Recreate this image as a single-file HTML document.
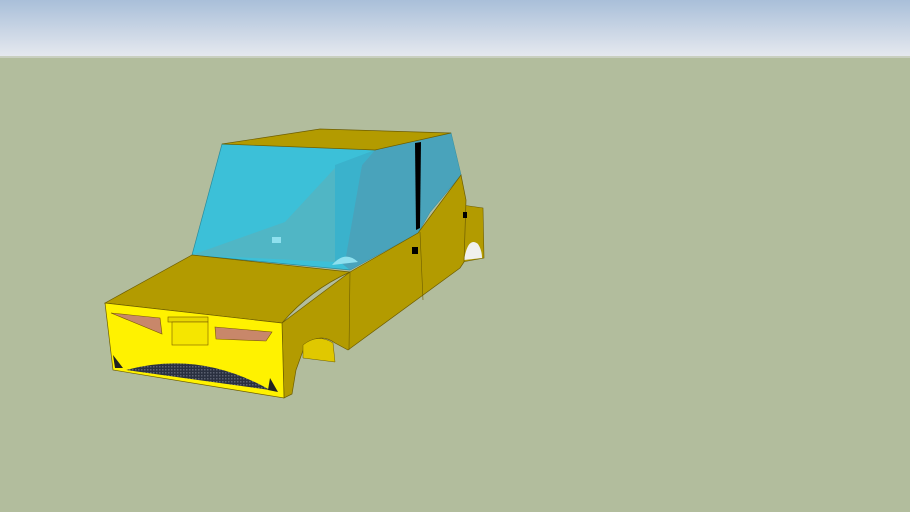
<!DOCTYPE html>
<html><head><style>html,body{margin:0;padding:0;width:910px;height:512px;overflow:hidden;background:#b2bd9d}</style></head>
<body>
<svg width="910" height="512" viewBox="0 0 910 512" xmlns="http://www.w3.org/2000/svg">
<defs><linearGradient id="sky" x1="0" y1="0" x2="0" y2="1"><stop offset="0" stop-color="#a9bfd9"/><stop offset="1" stop-color="#e6e9ef"/></linearGradient>
<pattern id="mesh" width="3" height="3" patternUnits="userSpaceOnUse"><rect width="3" height="3" fill="#2a3040"/><rect width="1.5" height="1.5" fill="#5a6070"/></pattern></defs>
<rect width="910" height="57" fill="url(#sky)"/>
<rect y="56" width="910" height="2" fill="#c9cfc0"/>
<rect y="58" width="910" height="454" fill="#b2bd9d"/>
<!-- rear wheel arch piece -->
<path d="M462,205 L483,208 L484,258 L462,262 Z" fill="#b39b00" stroke="#6d5d00" stroke-width="0.6"/>
<path d="M464,260 Q468,236 478,244 Q482,250 482,258 Z" fill="#f0f0ee"/>
<!-- glass -->
<path d="M222,144 L451,133 L461,175 L430,212 L418,233 L350,270 L192,255 Z" fill="#3cc0d8" stroke="#2a8c9c" stroke-width="0.7"/>
<path d="M375,150 L451,133 L461,175 L430,212 L418,233 L350,270 L340,262 L362,165 Z" fill="#4aa0b8" opacity="0.9"/>
<path d="M335,165 L375,150 L362,165 L345,262 L335,262 Z" fill="#3ab2cc"/>
<path d="M192,255 L285,222 L335,168 L335,262 Z" fill="#55b3c0" opacity="0.8"/>
<path d="M332,265 Q345,250 358,262 Z" fill="#8ee0ee"/>
<rect x="272" y="237" width="9" height="6" fill="#8ee0ee"/>
<path d="M415,143 L421,142 L420,228 L416,230 Z" fill="#000"/>
<!-- roof -->
<path d="M222,144 L320,129 L451,133 L375,150 Z" fill="#b39b00" stroke="#6d5d00" stroke-width="0.7"/>
<!-- side body -->
<path d="M282,323 L350,272 L418,233 L461,175 L466,200 L464,262 L460,268 L348,350 L335,343 Q320,332 305,345 L296,370 L292,394 L284,398 Z" fill="#b39b00" stroke="#6d5d00" stroke-width="0.7"/>
<path d="M420,232 L423,300 M350,272 L349,350" stroke="#6d5d00" stroke-width="0.6" fill="none"/>
<path d="M303,345 Q318,333 333,343 L335,362 L303,358 Z" fill="#e0c800" stroke="#6d5d00" stroke-width="0.5"/>
<rect x="412" y="247" width="6" height="7" fill="#000"/>
<rect x="463" y="212" width="4" height="6" fill="#000"/>
<!-- hood -->
<path d="M105,303 L192,255 L350,272 Q310,290 282,323 Z" fill="#b39b00" stroke="#6d5d00" stroke-width="0.7"/>
<!-- front face -->
<path d="M105,303 L282,323 L284,398 L113,370 Z" fill="#fff200" stroke="#6d5d00" stroke-width="0.7"/>
<path d="M111,313 L160,318 L162,334 Z" fill="#c8876a" stroke="#7a5a00" stroke-width="0.6"/>
<path d="M215,327 L272,332 L266,341 L216,339 Z" fill="#c8876a" stroke="#7a5a00" stroke-width="0.6"/>
<rect x="168" y="317" width="40" height="5" fill="#e8d800" stroke="#7a5a00" stroke-width="0.6"/>
<rect x="172" y="322" width="36" height="23" fill="#f5e600" stroke="#7a5a00" stroke-width="0.6"/>
<path d="M126,370 Q200,350 270,390 Z" fill="url(#mesh)"/>
<path d="M113,355 L123,368 L115,368 Z" fill="#222"/>
<path d="M270,378 L278,392 L268,390 Z" fill="#222"/>
</svg>
</body></html>
